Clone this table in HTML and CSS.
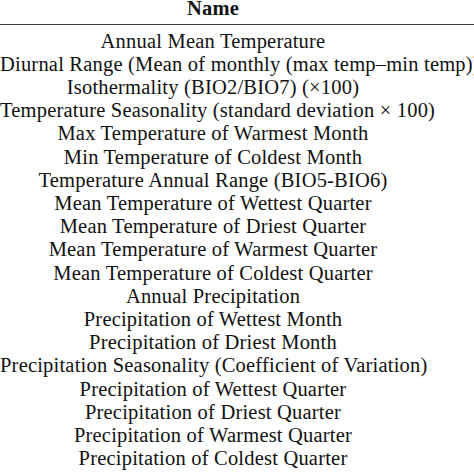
FILE: index.html
```html
<!DOCTYPE html>
<html>
<head>
<meta charset="utf-8">
<link rel="stylesheet" href="styles.css">
</head>
<body>
<div class="table">
  <div class="head"><div class="col"><span class="th">Name</span></div></div>
  <div class="body">
    <div class="col">
      <div class="cell">Annual Mean Temperature</div>
      <div class="cell">Diurnal Range (Mean of monthly (max temp–min temp))</div>
      <div class="cell">Isothermality (BIO2/BIO7) (×100)</div>
      <div class="cell">Temperature Seasonality (standard deviation × 100)</div>
      <div class="cell">Max Temperature of Warmest Month</div>
      <div class="cell">Min Temperature of Coldest Month</div>
      <div class="cell">Temperature Annual Range (BIO5-BIO6)</div>
      <div class="cell">Mean Temperature of Wettest Quarter</div>
      <div class="cell">Mean Temperature of Driest Quarter</div>
      <div class="cell">Mean Temperature of Warmest Quarter</div>
      <div class="cell">Mean Temperature of Coldest Quarter</div>
      <div class="cell">Annual Precipitation</div>
      <div class="cell">Precipitation of Wettest Month</div>
      <div class="cell">Precipitation of Driest Month</div>
      <div class="cell">Precipitation Seasonality (Coefficient of Variation)</div>
      <div class="cell">Precipitation of Wettest Quarter</div>
      <div class="cell">Precipitation of Driest Quarter</div>
      <div class="cell">Precipitation of Warmest Quarter</div>
      <div class="cell">Precipitation of Coldest Quarter</div>
    </div>
  </div>
</div>
</body>
</html>
```
FILE: styles.css
```css
html, body {
  margin: 0;
  padding: 0;
  background: #ffffff;
}
body {
  width: 474px;
  height: 474px;
  overflow: hidden;
  font-family: "Liberation Serif", "DejaVu Serif", serif;
  color: #111111;
  font-size: 20.5px;
  letter-spacing: 0.2px;
}
.table {
  width: 474px;
}
.head {
  height: 24px;
  border-bottom: 1px solid #3a3a3a;
}
.col {
  width: 426px;
  text-align: center;
}
.th {
  font-weight: bold;
  line-height: 16px;
  display: block;
}
.body {
  padding-top: 4.5px;
}
.cell {
  line-height: 23.2px;
  white-space: nowrap;
}
```
